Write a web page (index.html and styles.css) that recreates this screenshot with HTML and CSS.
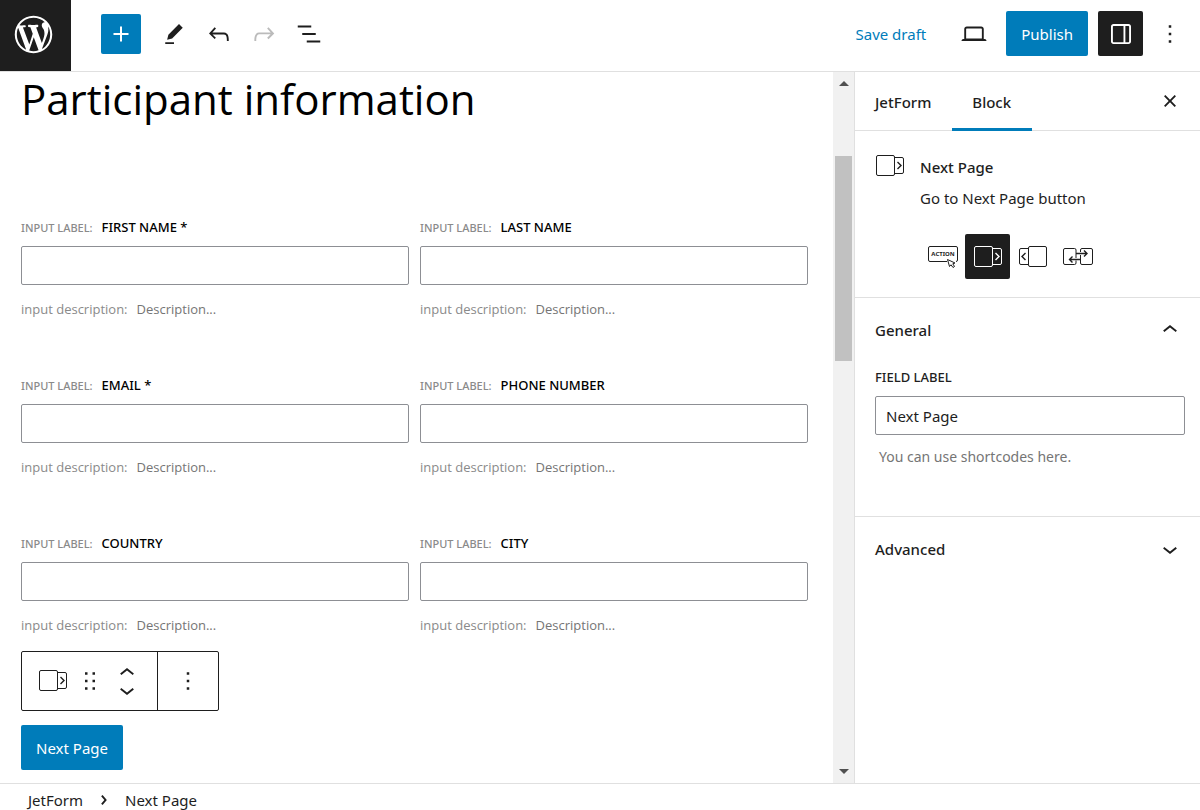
FILE: index.html
```html
<!DOCTYPE html>
<html lang="en">
  <head>
    <meta charset="UTF-8" />
    <meta name="viewport" content="width=device-width, initial-scale=1.0" />
    <title>Edit Form: Participant information</title>
    <link rel="stylesheet" href="styles.css">
  </head>
  <body>
    <!-- shared block icons -->
    <svg class="sprite" aria-hidden="true">
      <symbol id="icon-next-page" viewBox="0 0 30 30">
        <rect x="1.5" y="4.5" width="18" height="20" rx="1.5" />
        <path d="M19.5 6.5h7.5a1.5 1.5 0 0 1 1.5 1.5v13a1.5 1.5 0 0 1-1.5 1.5h-7.5" />
        <path class="heavy" d="M22.5 11l3.5 3.5-3.5 3.5" />
      </symbol>
      <symbol id="icon-more" viewBox="0 0 24 24">
        <path d="M13 19h-2v-2h2v2zm0-6h-2v-2h2v2zm0-6h-2V5h2v2z" />
      </symbol>
      <symbol id="icon-up" viewBox="0 0 24 24">
        <path d="M6.5 12.4L12 8l5.5 4.4-.9 1.2L12 10l-4.5 3.6-1-1.2z" />
      </symbol>
      <symbol id="icon-down" viewBox="0 0 24 24">
        <path d="M17.5 11.6L12 16l-5.5-4.4.9-1.2L12 14l4.5-3.6 1 1.2z" />
      </symbol>
    </svg>

    <header class="header">
      <a class="site-logo" href="#" aria-label="View posts">
        <svg viewBox="-2 -2 24 24"><path d="M20 10c0-5.51-4.49-10-10-10C4.48 0 0 4.49 0 10c0 5.52 4.48 10 10 10 5.51 0 10-4.48 10-10zM7.78 15.37L4.37 6.22c.55-.02 1.17-.08 1.17-.08.5-.06.44-1.13-.06-1.11 0 0-1.45.11-2.37.11-.18 0-.37 0-.58-.01C4.12 2.69 6.87 1.11 10 1.11c2.33 0 4.45.87 6.05 2.34-.68-.11-1.65.39-1.65 1.58 0 .74.45 1.36.9 2.1.35.61.55 1.36.55 2.46 0 1.49-1.4 5-1.4 5l-3.03-8.37c.54-.02.82-.17.82-.17.5-.05.44-1.25-.06-1.22 0 0-1.44.12-2.38.12-.87 0-2.33-.12-2.33-.12-.5-.03-.56 1.2-.06 1.22l.92.08 1.26 3.41zM17.41 10c.24-.64.74-1.87.43-4.25.7 1.29 1.05 2.71 1.05 4.25 0 3.29-1.73 6.24-4.4 7.78.97-2.59 1.94-5.2 2.92-7.78zM6.1 18.09C3.12 16.65 1.11 13.53 1.11 10c0-1.3.23-2.48.72-3.59C3.25 10.3 4.67 14.2 6.1 18.09zm4.03-6.63l2.58 6.98c-.86.29-1.76.45-2.71.45-.79 0-1.57-.11-2.29-.33.81-2.38 1.62-4.74 2.42-7.1z" /></svg>
      </a>

      <div class="header-tools">
        <button class="inserter" type="button" aria-label="Add block">
          <svg class="icon" viewBox="0 0 24 24"><path d="M18 11.2h-5.2V6h-1.6v5.2H6v1.6h5.2V18h1.6v-5.2H18z" /></svg>
        </button>
        <div class="tool-group">
          <button class="icon-button" type="button" aria-label="Tools">
            <svg class="icon" viewBox="0 0 24 24"><path d="m19 7-3-3-8.5 8.5-1 4 4-1L19 7Zm-7 11.5H5V20h7v-1.5Z" /></svg>
          </button>
          <button class="icon-button" type="button" aria-label="Undo">
            <svg class="icon" viewBox="0 0 24 24"><path d="M18.3 11.7c-.6-.6-1.4-.9-2.3-.9H6.7l2.9-3.3-1.1-1-4.5 5L8.5 16l1-1-2.7-2.7H16c.5 0 .9.2 1.3.5 1 1 1 3.4 1 4.5v.3h1.5v-.2c0-1.5 0-4.3-1.5-5.7z" /></svg>
          </button>
          <button class="icon-button" type="button" aria-label="Redo" disabled>
            <svg class="icon" viewBox="0 0 24 24"><path d="M15.6 6.5l-1.1 1 2.9 3.3H8c-.9 0-1.7.3-2.3.9-1.4 1.5-1.4 4.2-1.4 5.6v.2h1.5v-.3c0-1.1 0-3.5 1-4.5.3-.3.7-.5 1.3-.5h9.2L14.5 15l1.1 1.1 4.6-4.6-4.6-5z" /></svg>
          </button>
          <button class="icon-button" type="button" aria-label="List view">
            <svg class="icon" viewBox="0 0 24 24"><path d="M13.8 5.2H3v1.5h10.8V5.2zm-3.6 12v1.5H21v-1.5H10.2zm7.2-6H6.6v1.5h10.8v-1.5z" /></svg>
          </button>
        </div>
      </div>

      <div class="header-settings">
        <button class="save-draft" type="button">Save draft</button>
        <button class="icon-button" type="button" aria-label="Preview">
          <svg class="icon" viewBox="0 0 24 24"><path d="M20.5 16h-.7V8c0-1.1-.9-2-2-2H6.2c-1.1 0-2 .9-2 2v8h-.7c-.8 0-1.5.7-1.5 1.5h20c0-.8-.7-1.5-1.5-1.5zM5.7 8c0-.3.2-.5.5-.5h11.6c.3 0 .5.2.5.5v7.6H5.7V8z" /></svg>
        </button>
        <button class="button" type="button">Publish</button>
        <button class="icon-button active" type="button" aria-label="Settings">
          <svg class="icon" viewBox="0 0 24 24"><path d="M18 4H6c-1.1 0-2 .9-2 2v12c0 1.1.9 2 2 2h12c1.1 0 2-.9 2-2V6c0-1.1-.9-2-2-2zm-4 14.5H6c-.3 0-.5-.2-.5-.5V6c0-.3.2-.5.5-.5h8v13zm4.5-.5c0 .3-.2.5-.5.5h-2.5v-13H18c.3 0 .5.2.5.5v12z" /></svg>
        </button>
        <button class="icon-button narrow" type="button" aria-label="Options">
          <svg class="icon"><use href="#icon-more" /></svg>
        </button>
      </div>
    </header>

    <div class="workspace">
      <main class="canvas">
        <h1 class="form-title">Participant information</h1>

        <form class="fields">
          <div class="field">
            <label class="field-label" for="first-name"><small>Input label:</small> First name *</label>
            <input class="text-input" id="first-name" type="text">
            <p class="field-desc"><span>input description:</span> Description...</p>
          </div>
          <div class="field">
            <label class="field-label" for="last-name"><small>Input label:</small> Last name</label>
            <input class="text-input" id="last-name" type="text">
            <p class="field-desc"><span>input description:</span> Description...</p>
          </div>
          <div class="field">
            <label class="field-label" for="email"><small>Input label:</small> Email *</label>
            <input class="text-input" id="email" type="email">
            <p class="field-desc"><span>input description:</span> Description...</p>
          </div>
          <div class="field">
            <label class="field-label" for="phone"><small>Input label:</small> Phone number</label>
            <input class="text-input" id="phone" type="tel">
            <p class="field-desc"><span>input description:</span> Description...</p>
          </div>
          <div class="field">
            <label class="field-label" for="country"><small>Input label:</small> Country</label>
            <input class="text-input" id="country" type="text">
            <p class="field-desc"><span>input description:</span> Description...</p>
          </div>
          <div class="field">
            <label class="field-label" for="city"><small>Input label:</small> City</label>
            <input class="text-input" id="city" type="text">
            <p class="field-desc"><span>input description:</span> Description...</p>
          </div>
        </form>

        <div class="block-toolbar" role="toolbar" aria-label="Block tools">
          <div class="toolbar-group">
            <button type="button" aria-label="Next Page"><svg class="icon block-icon"><use href="#icon-next-page" /></svg></button>
            <button type="button" aria-label="Drag">
              <svg class="icon" viewBox="0 0 24 24"><path d="M8 7h2V5H8v2zm0 6h2v-2H8v2zm0 6h2v-2H8v2zm6-14v2h2V5h-2zm0 8h2v-2h-2v2zm0 6h2v-2h-2v2z" /></svg>
            </button>
            <div class="movers">
              <button type="button" aria-label="Move up"><svg class="icon"><use href="#icon-up" /></svg></button>
              <button type="button" aria-label="Move down"><svg class="icon"><use href="#icon-down" /></svg></button>
            </div>
          </div>
          <div class="toolbar-group">
            <button type="button" aria-label="Options"><svg class="icon"><use href="#icon-more" /></svg></button>
          </div>
        </div>

        <button class="button" type="button">Next Page</button>
      </main>

      <div class="scrollbar" aria-hidden="true">
        <span class="arrow-up"></span>
        <span class="thumb"></span>
        <span class="arrow-down"></span>
      </div>

      <aside class="sidebar">
        <div class="tabs">
          <button class="tab" type="button">JetForm</button>
          <button class="tab selected" type="button">Block</button>
          <button class="icon-button close" type="button" aria-label="Close settings">
            <svg class="icon" viewBox="0 0 24 24"><path d="M12 13.06l3.712 3.713 1.061-1.06L13.061 12l3.712-3.712-1.06-1.06L12 10.938 8.288 7.227l-1.061 1.06L10.939 12l-3.712 3.712 1.06 1.061L12 13.061z" /></svg>
          </button>
        </div>

        <section class="block-card">
          <svg class="icon block-icon"><use href="#icon-next-page" /></svg>
          <div>
            <h2>Next Page</h2>
            <p>Go to Next Page button</p>
            <div class="variations">
              <button class="icon-button" type="button" aria-label="Action">
                <svg class="icon block-icon" viewBox="0 0 30 30">
                  <path d="M19 19.5H2A1.5 1.5 0 0 1 .5 18V6A1.5 1.5 0 0 1 2 4.500h26A1.5 1.5 0 0 1 29.500 6v12a1.5 1.5 0 0 1-1.5 1.5" />
                  <text class="action-text" x="15" y="14" text-anchor="middle">ACTION</text>
                  <path d="M19.5 17.5l2 7 1.500-1.700 2 2.700 1.500-1-1.700-2.700 2.200-.8z" />
                </svg>
              </button>
              <button class="icon-button active" type="button" aria-label="Next page"><svg class="icon block-icon"><use href="#icon-next-page" /></svg></button>
              <button class="icon-button" type="button" aria-label="Previous page">
                <svg class="icon block-icon" viewBox="0 0 30 30">
                  <rect x="10.5" y="4.5" width="18" height="20" rx="1.5" />
                  <path d="M10.5 6.5H3A1.5 1.5 0 0 0 1.5 8v13A1.5 1.5 0 0 0 3 22.5h7.5" />
                  <path class="heavy" d="M7.5 11L4 14.5 7.5 18" />
                </svg>
              </button>
              <button class="icon-button" type="button" aria-label="Switch page">
                <svg class="icon block-icon" viewBox="0 0 30 30">
                  <path d="M13 18.500V21a1.500 1.500 0 0 1-1.500 1.500H2A1.500 1.500 0 0 1 .5 21V8A1.500 1.500 0 0 1 2 6.500h9.500A1.500 1.500 0 0 1 13 8v8M17.500 10V8A1.500 1.500 0 0 1 19 6.500h9A1.500 1.500 0 0 1 29.500 8v13a1.500 1.500 0 0 1-1.500 1.500h-9a1.500 1.500 0 0 1-1.500-1.500v-8" />
                  <path class="heavy" d="M13 11.500h11M21 8.500l3 3-3 3M17.500 17.500H6.500M9.500 14.500l-3 3 3 3" />
                </svg>
              </button>
            </div>
          </div>
        </section>

        <section class="panel open">
          <h2><button class="panel-toggle" type="button" aria-expanded="true">General <svg class="icon"><use href="#icon-up" /></svg></button></h2>
          <label class="control-label" for="field-label">Field label</label>
          <input class="text-input" id="field-label" type="text" value="Next Page">
          <p class="help">You can use shortcodes here.</p>
        </section>

        <section class="panel">
          <h2><button class="panel-toggle" type="button" aria-expanded="false">Advanced <svg class="icon"><use href="#icon-down" /></svg></button></h2>
        </section>
      </aside>
    </div>

    <footer class="breadcrumb">
      <a href="#">JetForm</a>
      <svg class="icon" viewBox="0 0 24 24"><path d="M10.862 8.04L14.28 12.029L10.862 16.017L9.723 15.04L12.305 12.029L9.723 9.017z" /></svg>
      <span>Next Page</span>
    </footer>
  </body>
</html>
```

FILE: styles.css
```css
* {
  box-sizing: border-box;
}
body {
  display: flex;
  flex-direction: column;
  height: 100vh;
  margin: 0;
  overflow: hidden;
  background: #fff;
  color: #1e1e1e;
  font-family: 'Segoe UI', 'Noto Sans', 'Open Sans', sans-serif;
  font-size: 15px;
  line-height: 20px;
}
h1, h2, p {
  margin: 0;
}
button, input {
  font: inherit;
  color: inherit;
}
button {
  padding: 0;
  border: 0;
  background: none;
  white-space: nowrap;
  cursor: pointer;
}
.sprite {
  display: none;
}
.icon {
  display: block;
  flex-shrink: 0;
  width: 30px;
  height: 30px;
  fill: currentColor;
}
.block-icon {
  fill: none;
  stroke: currentColor;
  stroke-width: 1;
}
.heavy {
  stroke-width: 1.4;
}
.action-text {
  fill: currentColor;
  stroke: none;
  font-size: 6px;
  font-weight: 700;
}

/* Buttons */
.icon-button {
  display: flex;
  align-items: center;
  justify-content: center;
  width: 45px;
  height: 45px;
  border-radius: 2px;
}
.icon-button:disabled {
  color: #bbb;
}
.icon-button.active {
  background: #1e1e1e;
  color: #fff;
}
.icon-button.narrow {
  width: 34px;
}
.button {
  height: 45px;
  padding: 0 15px;
  border-radius: 2px;
  background: #007cba;
  color: #fff;
}

/* Header */
.header {
  display: flex;
  flex-shrink: 0;
  height: 72px;
  border-bottom: 1px solid #e0e0e0;
}
.site-logo {
  display: flex;
  align-items: center;
  width: 71px;
  height: 71px;
  padding: 0 11px 2px;
  background: #1e1e1e;
}
.site-logo svg {
  width: 45px;
  height: 45px;
  fill: #fff;
}
.header-tools,
.header-settings {
  display: flex;
  align-items: center;
  gap: 10px;
}
.header-tools {
  padding: 0 0 3px 30px;
}
.header-settings {
  margin-left: auto;
  padding: 0 13px 4px 0;
}
.tool-group {
  display: flex;
}
.inserter {
  display: flex;
  align-items: center;
  justify-content: center;
  width: 40px;
  height: 40px;
  border-radius: 2px;
  background: #007cba;
  color: #fff;
}
.save-draft {
  height: 45px;
  padding: 0 15px;
  color: #007cba;
}

/* Canvas */
.workspace {
  display: flex;
  flex: 1;
  min-height: 0;
}
.canvas {
  flex: 1;
  padding: 0 25px 0 21px;
  overflow: hidden;
}
.form-title {
  margin-bottom: 91px;
  color: #000;
  font-family: 'Segoe UI', 'Open Sans', sans-serif;
  font-size: 42px;
  font-weight: 400;
  line-height: 54px;
}
.fields {
  display: grid;
  grid-template-columns: 1fr 1fr;
  gap: 56px 11px;
}
.field-label {
  display: flex;
  align-items: baseline;
  gap: 9px;
  height: 20px;
  margin-bottom: 9px;
  color: #000;
  font-size: 13px;
  font-weight: 500;
  text-transform: uppercase;
}
.field-label small {
  color: #8a8a8a;
  font-size: 11px;
}
.text-input {
  display: block;
  width: 100%;
  height: 39px;
  padding: 0 10px;
  border: 1px solid #8d8f94;
  border-radius: 2px;
  background: #fff;
}
.field-desc {
  display: flex;
  gap: 9px;
  margin-top: 14px;
  color: #757575;
  font-family: 'Segoe UI', 'Open Sans', sans-serif;
  font-size: 13px;
}
.field-desc span {
  color: #8a8a8a;
}

/* Block toolbar */
.block-toolbar {
  display: flex;
  width: fit-content;
  height: 60px;
  margin: 16px 0 14px;
  border: 1px solid #1e1e1e;
  border-radius: 2px;
}
.toolbar-group {
  display: flex;
  align-items: center;
  gap: 7px;
  padding: 0 15px;
}
.toolbar-group:first-child {
  padding-left: 16px;
}
.toolbar-group + .toolbar-group {
  border-left: 1px solid #1e1e1e;
}
.movers button {
  display: flex;
  align-items: center;
  height: 17px;
}

/* Scrollbar */
.scrollbar {
  display: flex;
  flex-direction: column;
  align-items: center;
  width: 21px;
  padding: 9px 0;
  background: #f1f1f1;
}
.arrow-up,
.arrow-down {
  border: 5px solid transparent;
}
.arrow-up {
  border-top: 0;
  border-bottom-color: #505050;
}
.arrow-down {
  margin-top: auto;
  border-bottom: 0;
  border-top-color: #505050;
}
.thumb {
  width: 17px;
  height: 205px;
  margin-top: 70px;
  background: #c1c1c1;
}

/* Sidebar */
.sidebar {
  width: 346px;
  border-left: 1px solid #e0e0e0;
}
.sidebar h2 {
  font-size: 15px;
  font-weight: 500;
}
.tabs {
  display: flex;
  height: 59px;
  border-bottom: 1px solid #e0e0e0;
}
.tab {
  height: 59px;
  padding: 3px 21px 0 20px;
  border-bottom: 3px solid transparent;
  font-weight: 500;
}
.tab.selected {
  border-bottom-color: #007cba;
}
.close {
  height: 58px;
  margin: 0 8px 0 auto;
}
.block-card {
  display: flex;
  gap: 15px;
  padding: 20px 20px 18px;
  border-bottom: 1px solid #e0e0e0;
}
.block-card h2 {
  margin: 6px 0 11px;
}
.variations {
  display: flex;
  margin-top: 26px;
}
.panel {
  padding: 0 15px 0 20px;
}
.panel.open {
  padding-bottom: 49px;
  border-bottom: 1px solid #e0e0e0;
}
.panel-toggle {
  display: flex;
  align-items: center;
  justify-content: space-between;
  width: 100%;
  height: 64px;
}
.control-label {
  display: block;
  margin: 5px 0 9px;
  font-size: 13px;
  font-weight: 500;
  text-transform: uppercase;
}
.help {
  margin: 12px 4px 0;
  color: #757575;
  font-size: 14px;
}

/* Footer */
.breadcrumb {
  display: flex;
  align-items: center;
  gap: 6px;
  flex-shrink: 0;
  height: 27px;
  padding: 6px 28px 0;
  border-top: 1px solid #e0e0e0;
}
.breadcrumb a {
  color: inherit;
  text-decoration: none;
}
```
